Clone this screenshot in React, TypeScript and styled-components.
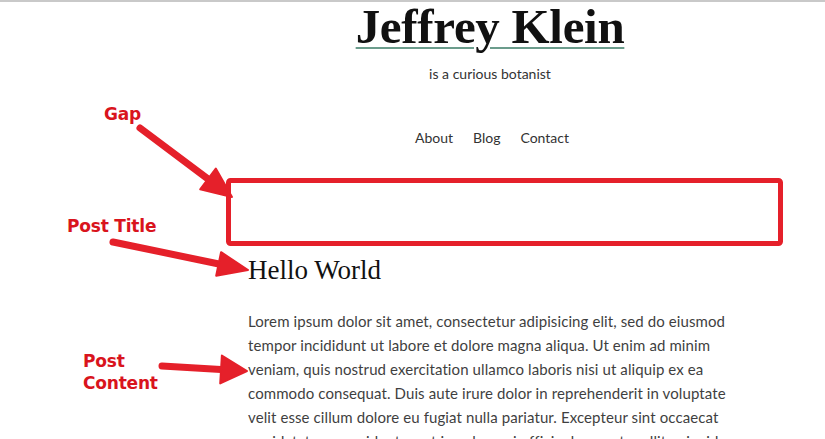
import React from "react";
import styled, { createGlobalStyle } from "styled-components";

const Global = createGlobalStyle`
  html, body { margin: 0; padding: 0; background: #fff; }
  body { font-family: Lato, "Open Sans", sans-serif; }
`;

const Page = styled.div`
  position: relative;
  width: 825px;
  height: 439px;
  overflow: hidden;
  background: #fff;
  border-top: 2px solid #c9c9c9;
  box-sizing: border-box;
`;

const Column = styled.div`
  margin-left: 248px;
  width: 484px;
  display: flex;
  flex-direction: column;
`;

const Header = styled.header`
  display: flex;
  flex-direction: column;
  align-items: center;
`;

const SiteTitle = styled.a`
  margin-top: 0px;
  font-family: "Liberation Serif", "Times New Roman", serif;
  font-weight: 700;
  font-size: 49px;
  line-height: 49px;
  color: #111;
  text-decoration: underline;
  text-decoration-color: #6b9c8c;
  text-decoration-thickness: 2px;
  text-underline-offset: 4px;
  text-decoration-skip-ink: auto;
  letter-spacing: -0.3px;
`;

const Tagline = styled.p`
  margin: 13px 0 0;
  font-family: Lato, sans-serif;
  font-size: 14px;
  line-height: 20px;
  color: #333;
`;

const Nav = styled.nav`
  margin-top: 44px;
  display: flex;
  gap: 20px;
  padding-left: 4px;
`;

const NavLink = styled.a`
  font-family: Lato, sans-serif;
  font-size: 14px;
  line-height: 20px;
  color: #333;
  text-decoration: none;
`;

const Gap = styled.div`
  height: 104px;
`;

const PostTitle = styled.h1`
  margin: 0;
  font-family: "Liberation Serif", "Times New Roman", serif;
  font-weight: 400;
  font-size: 27px;
  line-height: 36px;
  color: #111;
`;

const PostContent = styled.p`
  margin: 21px 0 0;
  font-family: Lato, sans-serif;
  font-size: 15px;
  line-height: 24px;
  letter-spacing: 0.1px;
  color: #3f3f3f;
`;

const Overlay = styled.svg`
  position: absolute;
  left: 0;
  top: -2px;
  width: 825px;
  height: 439px;
  pointer-events: none;
`;

const Label = styled.div<{ $x: number; $y: number }>`
  position: absolute;
  left: ${(p) => p.$x}px;
  top: ${(p) => p.$y}px;
  font-family: "DejaVu Sans", Verdana, sans-serif;
  font-weight: 700;
  font-size: 17px;
  line-height: 22px;
  color: #d9141d;
  letter-spacing: -0.2px;
`;

const RED = "#e5202a";

type ArrowProps = { x1: number; y1: number; tx: number; ty: number; head?: number; half?: number };

function Arrow({ x1, y1, tx, ty, head = 30, half = 13 }: ArrowProps) {
  const dx = tx - x1;
  const dy = ty - y1;
  const len = Math.hypot(dx, dy);
  const ux = dx / len;
  const uy = dy / len;
  const bx = tx - ux * head;
  const by = ty - uy * head;
  const px = -uy;
  const py = ux;
  const pts = `${tx},${ty} ${bx + px * half},${by + py * half} ${bx - px * half},${by - py * half}`;
  return (
    <g>
      <line x1={x1} y1={y1} x2={bx + ux * 4} y2={by + uy * 4} stroke={RED} strokeWidth={7} strokeLinecap="round" />
      <polygon points={pts} fill={RED} stroke={RED} strokeWidth={2} strokeLinejoin="round" />
    </g>
  );
}

const body =
  "Lorem ipsum dolor sit amet, consectetur adipisicing elit, sed do eiusmod tempor incididunt ut labore et dolore magna aliqua. Ut enim ad minim veniam, quis nostrud exercitation ullamco laboris nisi ut aliquip ex ea commodo consequat. Duis aute irure dolor in reprehenderit in voluptate velit esse cillum dolore eu fugiat nulla pariatur. Excepteur sint occaecat cupidatat non proident, sunt in culpa qui officia deserunt mollit anim id est laborum.";

export default function App() {
  return (
    <>
      <Global />
      <Page>
        <Column>
          <Header>
            <SiteTitle href="#">Jeffrey Klein</SiteTitle>
            <Tagline>is a curious botanist</Tagline>
            <Nav>
              <NavLink href="#">About</NavLink>
              <NavLink href="#">Blog</NavLink>
              <NavLink href="#">Contact</NavLink>
            </Nav>
          </Header>
          <Gap />
          <article>
            <PostTitle>Hello World</PostTitle>
            <PostContent>{body}</PostContent>
          </article>
        </Column>

        <Overlay viewBox="0 0 825 439">
          <rect x={228.5} y={180.5} width={552} height={63} rx={2} fill="none" stroke={RED} strokeWidth={5} />
          <Arrow x1={140} y1={128} tx={232} ty={197} />
          <Arrow x1={113} y1={242} tx={248} ty={270} head={30} half={12} />
          <Arrow x1={162} y1={366} tx={247} ty={371} head={26} half={14} />
        </Overlay>
        <Label $x={104} $y={101}>Gap</Label>
        <Label $x={67} $y={213}>Post Title</Label>
        <Label $x={83} $y={348}>Post<br />Content</Label>
      </Page>
    </>
  );
}
